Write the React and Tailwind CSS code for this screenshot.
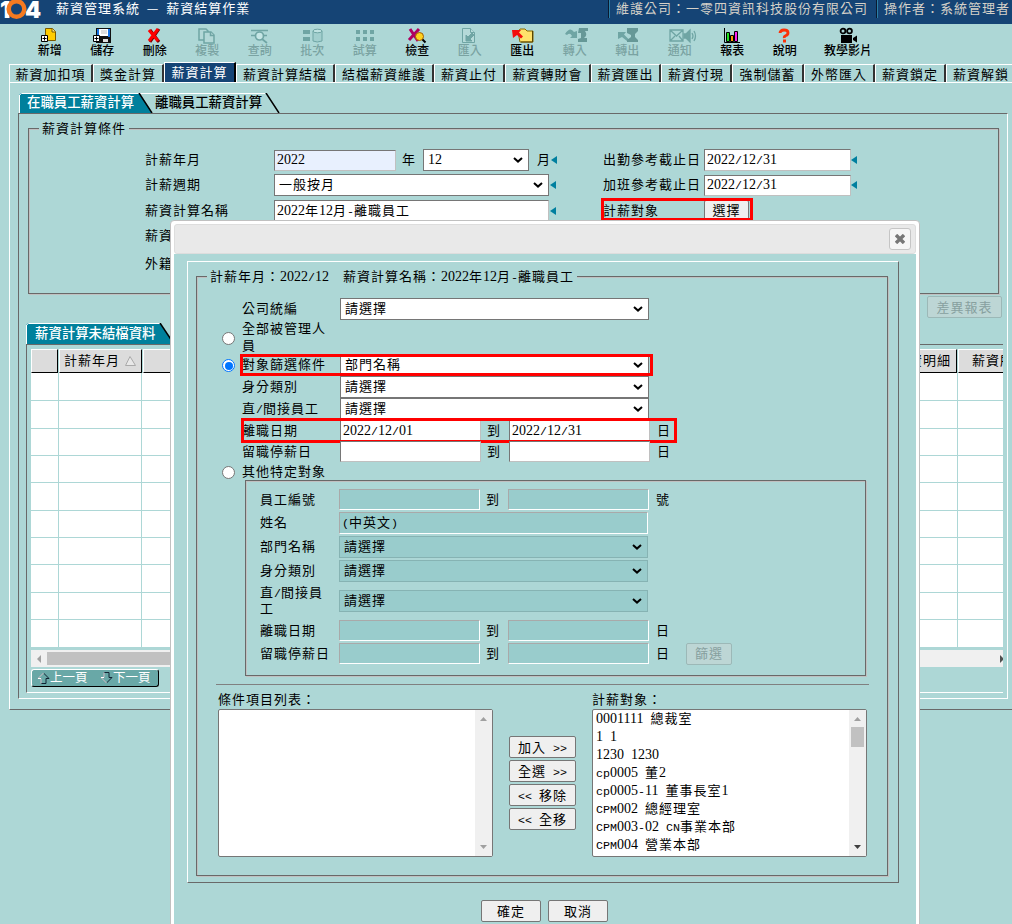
import { useState } from 'react';
import clsx from 'clsx';

const ACTIONS = [
  { id: 'add', label: '新增' },
  { id: 'save', label: '儲存' },
  { id: 'delete', label: '刪除' },
  { id: 'copy', label: '複製', disabled: true },
  { id: 'query', label: '查詢', disabled: true },
  { id: 'batch', label: '批次', disabled: true },
  { id: 'calc', label: '試算', disabled: true },
  { id: 'check', label: '檢查' },
  { id: 'import', label: '匯入', disabled: true },
  { id: 'export', label: '匯出' },
  { id: 'transferIn', label: '轉入', disabled: true },
  { id: 'transferOut', label: '轉出', disabled: true },
  { id: 'notify', label: '通知', disabled: true },
  { id: 'report', label: '報表' },
  { id: 'help', label: '說明' },
  { id: 'video', label: '教學影片', wide: true },
];

const TABS = [
  { label: '薪資加扣項', width: 'w-[84px]' },
  { label: '獎金計算', width: 'w-[71px]' },
  { label: '薪資計算', width: 'w-[72px]', active: true },
  { label: '薪資計算結檔', width: 'w-[99px]' },
  { label: '結檔薪資維護', width: 'w-[99px]' },
  { label: '薪資止付', width: 'w-[71px]' },
  { label: '薪資轉財會', width: 'w-[86px]' },
  { label: '薪資匯出', width: 'w-[70px]' },
  { label: '薪資付現', width: 'w-[71px]' },
  { label: '強制儲蓄', width: 'w-[72px]' },
  { label: '外幣匯入', width: 'w-[71px]' },
  { label: '薪資鎖定', width: 'w-[71px]' },
  { label: '薪資解鎖', width: 'w-[71px]' },
];

const DEPARTMENTS = [
  '0001111 總裁室',
  '1 1',
  '1230 1230',
  'cp0005 董2',
  'cp0005-11 董事長室1',
  'CPM002 總經理室',
  'CPM003-02 CN事業本部',
  'CPM004 營業本部',
];

const ROW_HEIGHTS = ['h-[28px]', 'h-[28px]', 'h-[27px]', 'h-[27px]', 'h-[28px]', 'h-[27px]', 'h-[27px]', 'h-[28px]', 'h-[27px]', 'h-[28px]'];

const GROOVE = 'border border-[#696969] shadow-[1px_1px_0_#c0c0c0,inset_1px_1px_0_#c0c0c0]';

// Half-width characters always take 7px, full-width ones 14px
const Txt = ({ children, className }) => (
  <span className={clsx('whitespace-pre', className)}>
    {children.split(/([0-9]+|[\x20-\x2f\x3a-\x7e]+)/).map((part, i) => {
      if (/^[0-9]/.test(part)) return <span key={i} className="text-[14px] leading-none tracking-normal">{part}</span>;
      if (/^[\x20-\x7e]/.test(part)) {
        return <span key={i} className="font-['Liberation_Mono'] text-[11.67px] leading-none tracking-normal">{part}</span>;
      }
      return part;
    })}
  </span>
);

const ActionIcon = ({ id }) => {
  const g = '#6fa5a4';
  const icons = {
    add: (
      <>
        <path d="M4.5 .5h7l3 3v9h-10z" fill="#fc0" stroke="#7a5a00" />
        <path d="M11 .5v3.500h3.500" fill="#ffe98a" stroke="#7a5a00" />
        <path d="M.5 7.500h6v6h-6z" fill="#fff" stroke="#000" />
        <path d="M3.500 8.500v4M1.500 10.500h4" stroke="#000" />
      </>
    ),
    save: (
      <>
        <path d="M3 0h15v15H3z" fill="#111" />
        <path d="M4 1h2v8H4zM15 1h2v8h-2z" fill="#1673e6" />
        <path d="M6 1h9v7H6z" fill="#fff" />
        <path d="M8 3h6M8 5h6" stroke="#bbb" />
        <path d="M10 11h5v3h-5z" fill="#ddd" />
        <path d="M.5 7.500h6v6h-6z" fill="#fff" stroke="#000" />
        <path d="M3.500 8.500v4M1.500 10.500h4" stroke="#000" />
      </>
    ),
    delete: (
      <>
        <path d="M4 2l9 12M13 1L4 14" stroke="#700" strokeWidth="3" />
        <path d="M3 2l9 11M12 1L3 13" stroke="#f00" strokeWidth="3" />
      </>
    ),
    copy: (
      <g fill="#b3d8d7" stroke={g} strokeWidth="1.500">
        <path d="M1 1h7l2 2v9H1z" />
        <path d="M6 4h7l3 3v8H6z" />
        <path d="M12.500 4v3.500H16" />
      </g>
    ),
    query: (
      <g fill="none" stroke={g} strokeWidth="1.700">
        <path d="M0 2.500h17M0 7.500h4M12 7.500h4M11 11l5 4" />
        <circle cx="8.500" cy="8" r="4" fill="#c5e6e5" />
      </g>
    ),
    batch: (
      <g fill={g}>
        <path d="M0 2h7v4H0zM0 9h7v4H0z" />
        <path d="M10 3v10q4 2 9 0V3" fill="#a2cfce" stroke={g} />
        <ellipse cx="14.500" cy="3" rx="4.500" ry="1.800" fill="#bfe2e1" stroke={g} />
      </g>
    ),
    calc: (
      <path d="M0 2h4v4H0zM7 2h4v4H7zM14 2h4v4h-4zM0 9h4v4H0zM7 9h4v4H7zM14 9h4v4h-4z" fill={g} />
    ),
    check: (
      <>
        <path d="M2 1l8 12M11 1L1 12" stroke="#b00060" strokeWidth="3" />
        <circle cx="11.500" cy="8.500" r="4" fill="#ffd21f" stroke="#a35c00" />
        <path d="M14.500 11.500l3 3" stroke="#000" strokeWidth="2" />
      </>
    ),
    import: (
      <g fill="#b5dad9" stroke={g}>
        <path d="M1.500 .5h8l4 4v10h-12z" />
        <path d="M9.500 .5v4h4" />
        <path d="M5 13V7l2 2 4-4 2 2-4 4 2 2z" fill={g} />
      </g>
    ),
    export: (
      <>
        <path d="M5 4l2-3h5l2 2h6v11H7z" fill="#ffe26b" stroke="#8a6a00" />
        <path d="M19.500 3v11H8" fill="none" stroke="#5a4500" />
        <path d="M-1 2h9L6 4.500l4 4-2 2-4-3.500L0 10z" fill="#f20d0d" />
      </>
    ),
    transferIn: (
      <g fill={g}>
        <path d="M-1 6q5-8 9-2l3-1v7H4l2-2q-2-4-5-1z" />
        <path d="M13 0h9v3h-3q3 4-1 7h3v4h-9v-3l3-1v-5h-3z" fill="#669897" />
      </g>
    ),
    transferOut: (
      <g fill={g}>
        <path d="M0 4h8L6 6.500l5 5-2 1.500-5-4-4 2z" />
        <path d="M9 0h11v3l-3 3v3l3 3v2H9v-2l4-3V7L9 5z" fill="#669897" />
      </g>
    ),
    notify: (
      <g fill="none" stroke={g} strokeWidth="1.300">
        <path d="M-1 2h13v11H-1zM-1 2l6.500 6L12 2M-1 13l5-5M12 13L8 8" />
        <path d="M13 6h2l4-4v12l-4-4h-2z" fill={g} />
        <path d="M21 5q2 3 0 6M23 3q3 5 0 10" />
      </g>
    ),
    report: (
      <>
        <path d="M1.500 0v14.500H17" fill="none" stroke="#000" />
        <path d="M3.500 4.500h3v9h-3z" fill="#1fe01f" stroke="#000" />
        <path d="M7.500 7.500h3v6h-3z" fill="#ff9a00" stroke="#000" />
        <path d="M11.500 3.500h3v10h-3z" fill="#f2e" stroke="#000" />
      </>
    ),
    help: (
      <>
        <path d="M4 5q0-3 4-3t4 2.800q0 2-2 2.700T8.300 10" fill="none" stroke="#fb3208" strokeWidth="2.800" />
        <path d="M7 11.500h3v3H7z" fill="#fb3208" />
      </>
    ),
    video: (
      <>
        <circle cx="4" cy="3" r="2.400" fill="none" stroke="#000" strokeWidth="1.800" />
        <circle cx="10.500" cy="3" r="2.400" fill="none" stroke="#000" strokeWidth="1.800" />
        <path d="M2 7h11v8H2zM14 10l4-2.500v7L14 12z" />
      </>
    ),
  };
  return <svg className="h-[16px] w-[24px] overflow-visible" viewBox="-3 0 24 16">{icons[id]}</svg>;
};

const Chevron = ({ className }) => (
  <svg className={className} width="10" height="6" viewBox="0 0 10 6" fill="none" stroke="#000" strokeWidth="2">
    <path d="M1 1l4 3.600L9 1" />
  </svg>
);

const Select = ({ value, className, disabled }) => (
  <div
    className={clsx(
      'flex items-center justify-between border pl-[4px] pr-[5px] h-[22px] shrink-0',
      disabled ? 'bg-[#99cccc] border-[#86b3b3]' : 'bg-white border-[#767676]',
      className
    )}
  >
    <Txt>{value}</Txt>
    <Chevron />
  </div>
);

const Field = ({ value = '', className, disabled, autofilled }) => (
  <div
    className={clsx(
      'flex items-center border pl-[2px] shrink-0',
      !/h-\[\d/.test(className) && 'h-[21px]',
      disabled
        ? 'bg-[#99cccc] border-[#a9a9a9] border-r-white border-b-white'
        : 'border-[#767676] border-r-[#c0c0c0] border-b-[#c0c0c0]',
      !disabled && (autofilled ? 'bg-[#e8f0fe]' : 'bg-white'),
      className
    )}
  >
    <Txt>{value}</Txt>
  </div>
);

const Button = ({ children, className, disabled }) => (
  <button
    className={clsx(
      'flex h-[22px] items-center justify-center rounded-[2px] border pt-px shrink-0',
      disabled ? 'border-[#9cb8b7] bg-[#bdd6d5] text-[#87a09f]' : 'border-[#767676] bg-[#efefef]',
      className
    )}
  >
    <Txt>{children}</Txt>
  </button>
);

const Required = ({ className }) => (
  <svg className={className} width="6" height="8" viewBox="0 0 6 8"><path d="M6 0v8L0 4z" fill="#007f9f" /></svg>
);

const Radio = ({ checked, onChange }) => (
  <button
    onClick={onChange}
    className={clsx(
      'flex h-[13px] w-[13px] items-center justify-center rounded-full border bg-white',
      checked ? 'border-[#0075ff]' : 'border-[#767676]'
    )}
  >
    {checked && <span className="h-[8px] w-[8px] rounded-full bg-[#0075ff]" />}
  </button>
);

const RedBox = ({ className }) => <div className={clsx('absolute border-[3px] border-[#f00]', className)} />;

const RangeRow = ({ label, from, to, unit, className, disabled, children }) => (
  <div className={clsx('relative flex h-[21px] items-center', className)}>
    <span className={disabled ? 'w-[79px]' : 'w-[98px]'}>{label}</span>
    <Field value={from} disabled={disabled} className="w-[141px]" />
    <span className="w-[28px] pl-[6px]">到</span>
    <Field value={to} disabled={disabled} className="w-[141px]" />
    <span className="w-[37px] pl-[7px]">{unit}</span>
    {children}
  </div>
);

const Header = () => (
  <header className="flex h-[24px] bg-[#154475] text-white">
    <svg className="h-[22px] w-[46px] shrink-0" viewBox="0 0 46 22">
      <text x="0" y="18" fill="#fff" className="font-['Inter'] text-[23px] font-black tracking-normal">1</text>
      <text x="25" y="18" fill="#fff" className="font-['Inter'] text-[23px] font-black tracking-normal">4</text>
      <circle cx="16.500" cy="9" r="7.800" fill="#154475" stroke="#f47a20" strokeWidth="4.500" />
    </svg>
    <span className="w-[562px] pl-[10px]">
      薪資管理系統 <span className="px-[2.500px] font-['Noto_Sans_CJK_TC'] leading-none">—</span> 薪資結算作業
    </span>
    <div className="mt-[-1px] flex h-[19px] w-[268px] items-center border-l border-[#0a1a30] pl-[7px] text-[#d4d0c8] shadow-[inset_1px_0_0_#2a7fa8]">
      維護公司：一零四資訊科技股份有限公司
    </div>
    <div className="mt-[-1px] flex h-[19px] items-center border-l border-[#0a1a30] pl-[7px] text-[#d4d0c8] shadow-[inset_1px_0_0_#2a7fa8]">
      操作者：系統管理者
    </div>
  </header>
);

const Toolbar = () => (
  <div className="flex h-[38px] pl-[23.5px] pt-[4px]">
    {ACTIONS.map((action) => (
      <button
        key={action.id}
        className={clsx(
          'flex shrink-0 flex-col items-center text-[12px] leading-[14px] tracking-normal font-medium',
          action.wide ? 'w-[74px]' : 'w-[52.500px]',
          action.disabled ? 'text-[#7aa3a2]' : 'text-black'
        )}
      >
        <ActionIcon id={action.id} />
        <span>{action.label}</span>
      </button>
    ))}
  </div>
);

const MainTabs = () => (
  <nav className="ml-[9px] flex h-[21px] w-[1003px] items-end border-b border-white">
    {TABS.map((tab) => (
      <div
        key={tab.label}
        className={clsx(
          'flex shrink-0 justify-center overflow-hidden border-l border-t border-r-2 border-l-white border-t-white',
          tab.width,
          tab.active ? 'h-[20px] border-r-black bg-[#154475] pt-px leading-[18px] text-white' : 'h-[18px] border-r-[#333] pt-px leading-[18px]'
        )}
      >
        {tab.label}
      </div>
    ))}
  </nav>
);

const SubTabs = () => (
  <div className="relative flex h-[20px] w-[262px] text-[13.4px] font-medium leading-[19px] tracking-normal">
    <svg className="absolute inset-0" width="262" height="20" viewBox="0 0 262 20">
      <path d="M0 20V2l2-2h118l13 20z" fill="#00809c" />
      <path d="M.5 20V2L2.500.5H120M121 .5h125" fill="none" stroke="#fff" />
      <path d="M120 0l13 20M247 0l13 20" stroke="#000" strokeWidth="1.500" />
    </svg>
    <span className="relative w-[128px] pl-[8px] text-white">在職員工薪資計算</span>
    <span className="relative pl-[8px]">離職員工薪資計算</span>
  </div>
);

const Conditions = () => (
  <fieldset className={clsx('relative ml-[9px] mt-[14px] h-[166px] w-[971px] shrink-0', GROOVE)}>
    <span className="absolute left-[10px] top-[-9px] bg-[#add7d6] px-[3px]">薪資計算條件</span>
    <div className="flex pl-[116px] pt-[20px]">
      <div className="w-[458px]">
        <div className="flex h-[22px] items-center">
          <span className="w-[129px]">計薪年月</span>
          <Field autofilled value="2022" className="w-[122px]" />
          <span className="w-[27px] pl-[6px]">年</span>
          <Select value="12" className="w-[106px]" />
          <span className="pl-[8px]">月</span>
          <Required />
        </div>
        <div className="mt-[3px] flex h-[22px] items-center">
          <span className="w-[129px]">計薪週期</span>
          <Select value="一般按月" className="w-[275px]" />
          <Required className="ml-px" />
        </div>
        <div className="mt-[4px] flex h-[21px] items-center">
          <span className="w-[129px]">薪資計算名稱</span>
          <Field value="2022年12月-離職員工" className="w-[275px]" />
          <Required className="ml-px" />
        </div>
        <p className="mt-[6px]">薪資計算說明</p>
        <p className="mt-[10px]">外籍員工稅率</p>
      </div>
      <div>
        <div className="flex h-[22px] items-center">
          <span className="w-[101px]">出勤參考截止日</span>
          <Field value="2022/12/31" className="h-[22px] w-[147px]" />
          <Required />
        </div>
        <div className="mt-[3px] flex h-[22px] items-center">
          <span className="w-[101px]">加班參考截止日</span>
          <Field value="2022/12/31" className="w-[147px]" />
          <Required />
        </div>
        <div className="relative mt-[4px] flex h-[21px] items-center">
          <span className="w-[101px]">計薪對象</span>
          <Button className="w-[45px]">選擇</Button>
          <RedBox className="left-[-2px] top-[-2px] h-[23px] w-[152px]" />
        </div>
      </div>
    </div>
  </fieldset>
);

const HeaderCell = ({ children, className }) => (
  <div className={clsx('flex h-[24px] shrink-0 items-center overflow-hidden border-b border-r border-b-black border-r-black border-l border-t border-l-white border-t-white bg-[#dcdcdc]', className)}>
    {children}
  </div>
);

const PendingTable = () => (
  <div className="mt-[4px] ml-[4px] w-[973px]">
    <div className="flex gap-px">
      <HeaderCell className="w-[27px]" />
      <HeaderCell className="w-[83px] pl-[4px]">
        計薪年月
        <svg className="ml-[5px]" width="11" height="10" viewBox="0 0 11 10">
          <path d="M5 .5L.5 9.500h10z" fill="#e8e8e8" stroke="#aaa" />
        </svg>
      </HeaderCell>
      <HeaderCell className="w-[814px] justify-end pr-[5px]">薪資明細</HeaderCell>
      <HeaderCell className="w-[46px] border-r-0 pl-[13px]"><span className="shrink-0">薪資所得</span></HeaderCell>
    </div>
    {ROW_HEIGHTS.map((height, i) => (
      <div key={i} className={clsx('flex gap-px border-b border-[#add7d6]', height)}>
        <div className="w-[27px] bg-white" />
        <div className="w-[82px] bg-white" />
        <div className="w-[815px] bg-white" />
        <div className="w-[46px] bg-white" />
      </div>
    ))}
    <div className="mt-[2px] flex h-[17px] items-center justify-between bg-[#f0f0f0] pl-[6px]">
      <svg width="4" height="8" viewBox="0 0 4 8"><path d="M4 0v8L0 4z" fill="#a0a0a0" /></svg>
      <div className="ml-[6px] mr-auto h-[13px] w-[640px] bg-[#c1c1c1]" />
      <svg width="4" height="8" viewBox="0 0 4 8"><path d="M0 0v8l4-4z" fill="#505050" /></svg>
    </div>
    <div className="mt-[2px] flex h-[18px] w-[128px] items-center rounded-[3px] border border-l-white border-t-white border-b-black border-r-black bg-[#69a8a7] pl-[5px] text-[12.500px] leading-[14px] tracking-normal text-white">
      <svg width="13" height="12" viewBox="0 0 13 12"><path d="M6.500 1L1 6.500h3v5h5v-5h3z" fill="#69a8a7" stroke="#123" /><path d="M6.500 1L1 6.500h3v5" fill="none" stroke="#fff" /></svg>
      <span className="w-[50px]">上一頁</span>
      <svg width="13" height="12" viewBox="0 0 13 12"><path d="M6.500 11L1 5.500h3v-5h5v5h3z" fill="#69a8a7" stroke="#123" /><path d="M4 .5v5H1l5.500 5.500" fill="none" stroke="#fff" /></svg>
      <span>下一頁</span>
    </div>
  </div>
);

const Pending = () => (
  <div className="ml-[7px] w-[977px]">
    <div className="relative h-[21px] w-[147px] text-[13.4px] font-medium leading-[21px] tracking-normal">
      <svg className="absolute left-0 top-0" width="150" height="21" viewBox="0 0 150 21">
        <path d="M0 21V2l2-2h132l14 21z" fill="#00809c" />
        <path d="M.5 21V2L2.500.5H134" fill="none" stroke="#fff" />
        <path d="M134 0l14 21" stroke="#000" strokeWidth="1.500" />
      </svg>
      <span className="relative whitespace-nowrap pl-[9px] text-white">薪資計算未結檔資料</span>
    </div>
    <div className="flex h-[349px] overflow-hidden border-b border-l border-t border-b-white border-l-[#696969] border-t-[#696969]">
      <PendingTable />
    </div>
  </div>
);

const ListBox = ({ items, thumb }) => (
  <div className="flex h-[148px] w-[275px] rounded-[2px] border border-[#767676] bg-white">
    <div className="flex-1 pl-[3px] leading-[17px]">
      {items.map((item) => (
        <div key={item} className="h-[18px]"><Txt>{item}</Txt></div>
      ))}
    </div>
    <div className="flex w-[17px] flex-col items-center bg-[#f0f0f0] pb-[7px] pt-[7px]">
      <svg width="7" height="4" viewBox="0 0 7 4"><path d="M0 4h7L3.500 0z" fill="#a0a0a0" /></svg>
      {thumb && <div className="mt-[6px] h-[20px] w-[13px] bg-[#c1c1c1]" />}
      <svg className="mt-auto" width="7" height="4" viewBox="0 0 7 4">
        <path d="M0 0h7L3.500 4z" fill={thumb ? '#404040' : '#a0a0a0'} />
      </svg>
    </div>
  </div>
);

const TargetFieldset = () => {
  const [target, setTarget] = useState('filter');

  return (
    <fieldset className={clsx('relative ml-[8px] mt-[14px] h-[600px] w-[692px]', GROOVE)}>
      <span className="absolute left-[10px] top-[-9px] bg-[#add7d6] px-[3px]">
        <Txt>計薪年月：2022/12  薪資計算名稱：2022年12月-離職員工</Txt>
      </span>
      <div className="flex pt-[21px]">
        {/* Radio column */}
        <div className="flex w-[45px] flex-col pl-[25px] pt-[34px]">
          <Radio checked={target === 'all'} onChange={() => setTarget('all')} />
          <div className="mt-[14px]"><Radio checked={target === 'filter'} onChange={() => setTarget('filter')} /></div>
          <div className="mt-[94px]"><Radio checked={target === 'other'} onChange={() => setTarget('other')} /></div>
        </div>

        <div className="w-[640px]">
          <div className="flex h-[22px] items-center">
            <span className="w-[98px]">公司統編</span>
            <Select value="請選擇" className="w-[309px]" />
          </div>
          <p className="h-[34px] w-[90px] leading-[17px]">全部被管理人員</p>
          <div className="relative flex h-[22px] items-center">
            <span className="w-[98px]">對象篩選條件</span>
            <Select value="部門名稱" className="w-[309px]" />
            <RedBox className="left-[-2px] top-0 h-[22px] w-[413px]" />
          </div>
          <div className="flex h-[22px] items-center">
            <span className="w-[98px]">身分類別</span>
            <Select value="請選擇" className="w-[309px]" />
          </div>
          <div className="flex h-[22px] items-center">
            <span className="w-[98px]"><Txt>直/間接員工</Txt></span>
            <Select value="請選擇" className="w-[309px]" />
          </div>
          <RangeRow label="離職日期" from="2022/12/01" to="2022/12/31" unit="日">
            <RedBox className="left-[-1px] top-[-2px] h-[25px] w-[436px]" />
          </RangeRow>
          <RangeRow label="留職停薪日" unit="日" />
          <p className="leading-[19px]">其他特定對象</p>

          <div className={clsx('ml-[3px] mt-[-1px] h-[196px] w-[621px] pl-[14px] pt-[8px]', GROOVE)}>
            <RangeRow disabled label="員工編號" unit="號" />
            <div className="mt-[2px] flex h-[22px] items-center">
              <span className="w-[79px]">姓名</span>
              <Field disabled value="(中英文)" className="h-[22px] w-[309px]" />
            </div>
            <div className="mt-[2px] flex h-[22px] items-center">
              <span className="w-[79px]">部門名稱</span>
              <Select disabled value="請選擇" className="w-[309px]" />
            </div>
            <div className="mt-[2px] flex h-[22px] items-center">
              <span className="w-[79px]">身分類別</span>
              <Select disabled value="請選擇" className="w-[309px]" />
            </div>
            <div className="mt-[2px] flex h-[34px] items-center">
              <div className="w-[79px] leading-[16px]">
                <p className="h-[16px]"><Txt>直/間接員</Txt></p>
                <p className="h-[16px]">工</p>
              </div>
              <Select disabled value="請選擇" className="w-[309px]" />
            </div>
            <RangeRow disabled label="離職日期" unit="日" className="mt-[2px]" />
            <RangeRow disabled label="留職停薪日" unit="日" className="mt-[2px]">
              <Button disabled className="w-[46px]">篩選</Button>
            </RangeRow>
          </div>
        </div>
      </div>

      <div className="ml-[19px] mt-[8px] h-px w-[653px] bg-[#808080]" />

      <div className="ml-[21px] mt-[6px] flex">
        <div>
          <p className="h-[18px]">條件項目列表：</p>
          <ListBox items={[]} />
        </div>
        <div className="ml-[16px] flex flex-col gap-[2px] pt-[45px]">
          <Button className="w-[67px]">{'加入 >>'}</Button>
          <Button className="w-[67px]">{'全選 >>'}</Button>
          <Button className="w-[67px]">{'<< 移除'}</Button>
          <Button className="w-[67px]">{'<< 全移'}</Button>
        </div>
        <div className="ml-[16px]">
          <p className="h-[18px]">計薪對象：</p>
          <ListBox items={DEPARTMENTS} thumb />
        </div>
      </div>
    </fieldset>
  );
};

const TargetDialog = () => (
  <div className="absolute left-[170px] top-[220px] h-[720px] w-[750px] rounded-t-[4px] border border-[#c0c0c0] bg-white p-[3px]">
    <div className="flex h-[30px] items-center justify-end rounded-[3px] border border-[#dddddd] bg-[#e9e9e9] pr-[4px]">
      <button className="flex h-[22px] w-[22px] items-center justify-center rounded-[3px] border border-[#c5c5c5] bg-[#f6f6f6]">
        <svg width="10" height="10" viewBox="0 0 10 10" stroke="#777" strokeWidth="3.400"><path d="M1 1l8 8M9 1L1 9" /></svg>
      </button>
    </div>
    <div className="h-[680px] bg-[#add7d6] pl-[13px] pt-[7px]">
      <div className="h-[622px] w-[712px] border border-b-[#696969] border-l-white border-r-[#696969] border-t-white">
        <TargetFieldset />
      </div>
      <div className="mt-[17px] flex gap-[7px] pl-[294px]">
        <Button className="w-[60px]">確定</Button>
        <Button className="w-[60px]">取消</Button>
      </div>
    </div>
  </div>
);

export default function App() {
  return (
    <div className="relative h-[924px] w-[1012px] overflow-hidden bg-[#add7d6] font-['Liberation_Serif','Noto_Sans_CJK_TC',sans-serif] text-[13px] leading-[18px] tracking-[1px] text-black">
      <Header />
      <Toolbar />
      <MainTabs />
      <main className="ml-[9px] h-[627px] border-b border-l border-b-[#696969] border-l-white pl-[8px] pt-[10px]">
        <div className="ml-px"><SubTabs /></div>
        <div className="flex h-[586px] w-[990px] flex-col border border-b-white border-l-[#696969] border-r-white border-t-[#696969]">
          <Conditions />
          <div className="mt-[2px] flex h-[22px] shrink-0 justify-end pr-[5px]">
            <Button disabled className="w-[75px]">差異報表</Button>
          </div>
          <div className="mt-[5px]"><Pending /></div>
        </div>
      </main>
      <TargetDialog />
    </div>
  );
}
